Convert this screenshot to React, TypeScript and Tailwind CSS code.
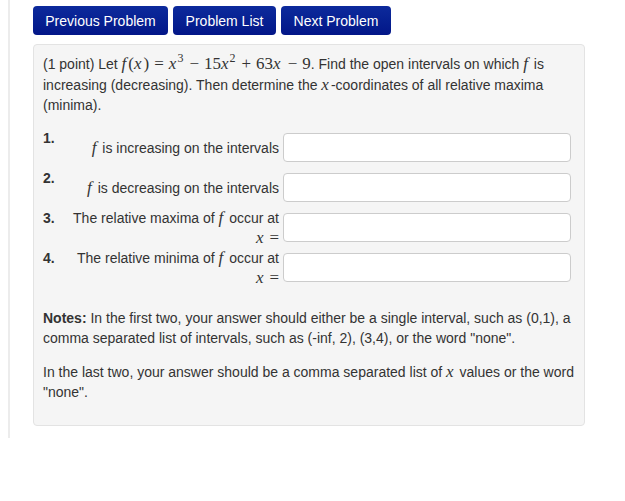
import React from "react";

const sans = "font-['Liberation_Sans',Arial,sans-serif]";
const serif = "font-['Liberation_Serif','Times_New_Roman',serif]";

function V({ children }: { children: React.ReactNode }) {
  return <span className={`${serif} italic text-[17px] pr-[2px]`}>{children}</span>;
}

function M({ children }: { children: React.ReactNode }) {
  return <span className={`${serif} text-[17px]`}>{children}</span>;
}

function Op({ children }: { children: React.ReactNode }) {
  return <span className={`${serif} text-[17px] mx-[5px]`}>{children}</span>;
}

function Sup({ children }: { children: React.ReactNode }) {
  return <sup className={`${serif} text-[12px] relative -top-[7px] -ml-[1px] mr-[1px]`}>{children}</sup>;
}

type Item = { n: string; lines: React.ReactNode[] };

const items: Item[] = [
  { n: "1.", lines: [<><V>f</V> is increasing on the intervals</>] },
  { n: "2.", lines: [<><V>f</V> is decreasing on the intervals</>] },
  { n: "3.", lines: [<>The relative maxima of <V>f</V> occur at</>, <><V>x</V> <M>=</M></>] },
  { n: "4.", lines: [<>The relative minima of <V>f</V> occur at</>, <><V>x</V> <M>=</M></>] },
];

const buttons = [
  { label: "Previous Problem", w: "w-[135px]" },
  { label: "Problem List", w: "w-[103px]" },
  { label: "Next Problem", w: "w-[110px]" },
];

export default function App() {
  return (
    <div className={`${sans} bg-white w-[625px] h-[501px] text-[14px] text-[#333]`}>
      <div className="ml-[8px] w-[580px] h-[438px] border-l-2 border-[#ececec] pl-[23px] pt-[6px]">
        <div className="flex gap-[5px]">
          {buttons.map((b) => (
            <button
              key={b.label}
              className={`${b.w} h-[29px] rounded-[4px] bg-gradient-to-b from-[#0d2a9c] to-[#031688] text-white text-[14px] leading-none`}
            >
              {b.label}
            </button>
          ))}
        </div>

        <div className="mt-[9px] w-[552px] h-[382px] bg-[#f5f5f5] border border-[#e3e3e3] rounded-[4px] pl-[9px] pr-[10px] pt-[9px]">
          <p className="leading-[20.5px]">
            (1 point) Let <V>f</V>
            <M>(</M>
            <V>x</V>
            <M>)</M>
            <Op>=</Op>
            <V>x</V>
            <Sup>3</Sup>
            <Op>−</Op>
            <M>15</M>
            <V>x</V>
            <Sup>2</Sup>
            <Op>+</Op>
            <M>63</M>
            <V>x</V>
            <Op>−</Op>
            <M>9</M>. Find the open intervals on which <V>f</V> is increasing (decreasing). Then
            determine the <V>x</V>-coordinates of all relative maxima (minima).
          </p>

          <div className="mt-[12px] flex flex-col">
            {items.map((it) => (
              <div key={it.n} className="flex h-[40px]">
                <div className="w-[22px] font-bold leading-[20px]">{it.n}</div>
                <div className="w-[214px] flex flex-col justify-center items-end text-right leading-[20px]">
                  {it.lines.map((l, i) => (
                    <div key={i} className="whitespace-nowrap">{l}</div>
                  ))}
                </div>
                <div className="flex items-center pl-[4px]">
                  <input className="w-[288px] h-[29px] bg-white border border-[#ccc] rounded-[4px]" />
                </div>
              </div>
            ))}
          </div>

          <p className="mt-[20px] leading-[20px]">
            <b>Notes:</b> In the first two, your answer should either be a single interval, such as
            (0,1), a comma separated list of intervals, such as (-inf, 2), (3,4), or the word "none".
          </p>
          <p className="mt-[14px] leading-[20px]">
            In the last two, your answer should be a comma separated list of <V>x</V> values or the
            word "none".
          </p>
        </div>
      </div>
    </div>
  );
}
